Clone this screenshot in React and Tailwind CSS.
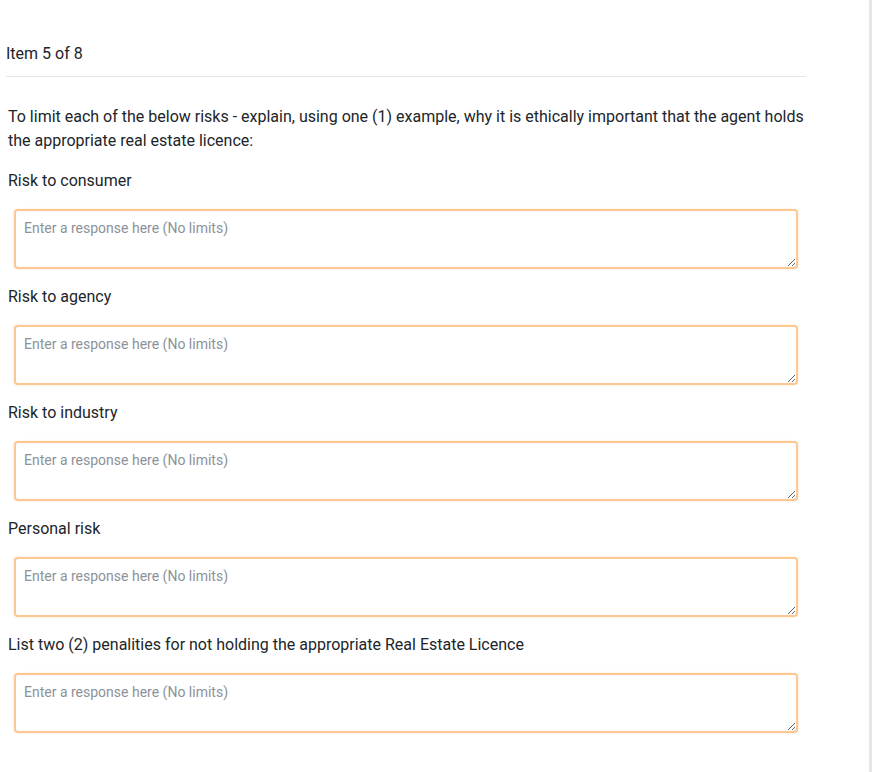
import React from 'react';

const FIELDS = ['Risk to consumer', 'Risk to agency', 'Risk to industry', 'Personal risk', 'List two (2) penalities for not holding the appropriate Real Estate Licence'];

function Response() {
  return (
    <div className="pl-[8px] mt-[16px]">
      <textarea
        placeholder="Enter a response here (No limits)"
        className="block w-[784px] h-[60px] resize-y rounded-[4px] border-2 border-[#fdc792] bg-white px-[8px] pt-[7px] text-[14px] leading-[20px] text-[#374151] placeholder:text-[#8c9299] outline-none shadow-[0_0_2px_rgba(253,199,146,0.6)]"
      />
    </div>
  );
}

export default function App() {
  return (
    <div className="min-h-screen bg-white flex" style={{ fontFamily: 'Roboto, "Liberation Sans", sans-serif' }}>
      <div className="w-[872px] shrink-0 min-h-screen border-r-[3px] border-[#e3e6ea] pl-[6px] pt-[43px]">
        <div className="w-[800px]">
          <div className="text-[16px] leading-[22px] text-[#212529] pb-[11px] border-b border-[#e6e6e6]">Item 5 of 8</div>
          <div className="pl-[2px] mt-[28px] text-[16px] leading-[24px] text-[#212529]">
            To limit each of the below risks - explain, using one (1) example, why it is ethically important that the agent holds the appropriate real estate licence:
          </div>
          {FIELDS.map((f, i) => (
            <div key={f}>
              <div className={`pl-[2px] text-[16px] leading-[24px] text-[#212529] ${i === 0 ? 'mt-[16px]' : 'mt-[16px]'}`}>{f}</div>
              <Response />
            </div>
          ))}
        </div>
      </div>
    </div>
  );
}
